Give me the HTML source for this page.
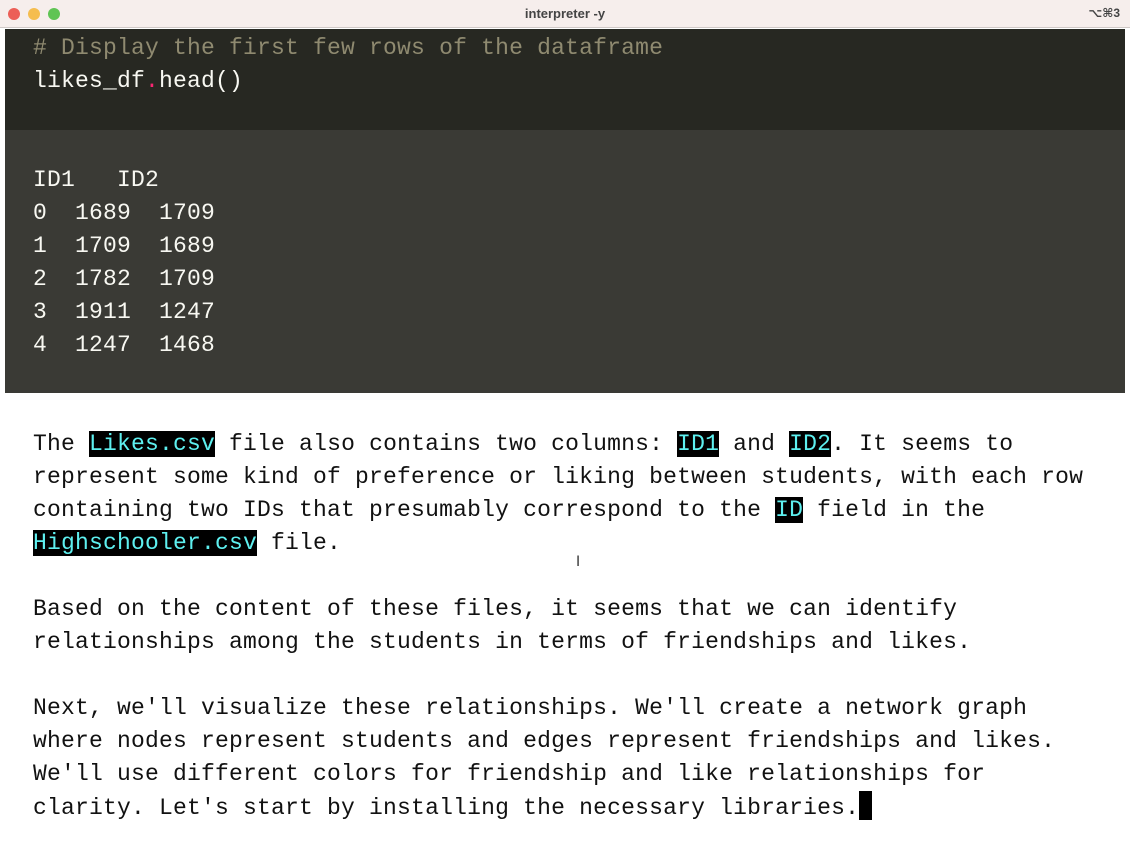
<!DOCTYPE html>
<html><head><style>
html,body{margin:0;padding:0;width:1130px;height:858px;background:#fff;overflow:hidden}
body{font-family:"Liberation Mono",monospace;font-size:23px;letter-spacing:0.2px;position:relative}
.tb{position:absolute;left:0;top:0;width:1130px;height:28px;background:#f6eeec;border-bottom:1px solid #cfc8c6;box-sizing:border-box;letter-spacing:0}
.dot{position:absolute;top:8px;width:12px;height:12px;border-radius:50%}
.tt{position:absolute;top:6px;width:100%;text-align:center;font:13px "Liberation Sans",sans-serif;color:#444;font-weight:bold}
.sc{position:absolute;right:10px;top:6px;font:bold 12px "Liberation Sans","DejaVu Sans",sans-serif;color:#444}
.code{position:absolute;left:5px;top:29px;width:1120px;height:101px;background:#272822}
.out{position:absolute;left:5px;top:130px;width:1120px;height:263px;background:#3a3a35}
.l{position:absolute;left:33px;white-space:pre;line-height:33px;height:33px}
.w{color:#f8f8f2}
.c{color:#8f8a70}
.t{color:#111}
.h{background:#000;color:#5ef0f0}
.cur{display:inline-block;width:13px;height:29px;background:#000;vertical-align:-6px}
</style></head><body>
<div class="tb">
<div class="dot" style="left:8px;background:#ec5f57"></div>
<div class="dot" style="left:28px;background:#f5bd4f"></div>
<div class="dot" style="left:48px;background:#5fc454"></div>
<div class="tt">interpreter -y</div>
<div class="sc">⌥⌘3</div>
</div>
<div class="code"></div>
<div class="out"></div>
<div class="l c" style="top:32px"># Display the first few rows of the dataframe</div>
<div class="l w" style="top:65px">likes_df<span style="color:#f92672">.</span>head()</div>
<div class="l w" style="top:164px">ID1   ID2</div>
<div class="l w" style="top:197px">0  1689  1709</div>
<div class="l w" style="top:230px">1  1709  1689</div>
<div class="l w" style="top:263px">2  1782  1709</div>
<div class="l w" style="top:296px">3  1911  1247</div>
<div class="l w" style="top:329px">4  1247  1468</div>
<div class="l t" style="top:428px">The <span class="h">Likes.csv</span> file also contains two columns: <span class="h">ID1</span> and <span class="h">ID2</span>. It seems to</div>
<div class="l t" style="top:461px">represent some kind of preference or liking between students, with each row</div>
<div class="l t" style="top:494px">containing two IDs that presumably correspond to the <span class="h">ID</span> field in the</div>
<div class="l t" style="top:527px"><span class="h">Highschooler.csv</span> file.</div>
<div class="l t" style="top:593px">Based on the content of these files, it seems that we can identify</div>
<div class="l t" style="top:626px">relationships among the students in terms of friendships and likes.</div>
<div class="l t" style="top:692px">Next, we'll visualize these relationships. We'll create a network graph</div>
<div class="l t" style="top:725px">where nodes represent students and edges represent friendships and likes.</div>
<div class="l t" style="top:758px">We'll use different colors for friendship and like relationships for</div>
<div class="l t" style="top:791px">clarity. Let's start by installing the necessary libraries.<span class="cur"></span></div>
<div style="position:absolute;left:576px;top:554px;font:14px 'DejaVu Sans',sans-serif;color:#333">I</div>
</body></html>
